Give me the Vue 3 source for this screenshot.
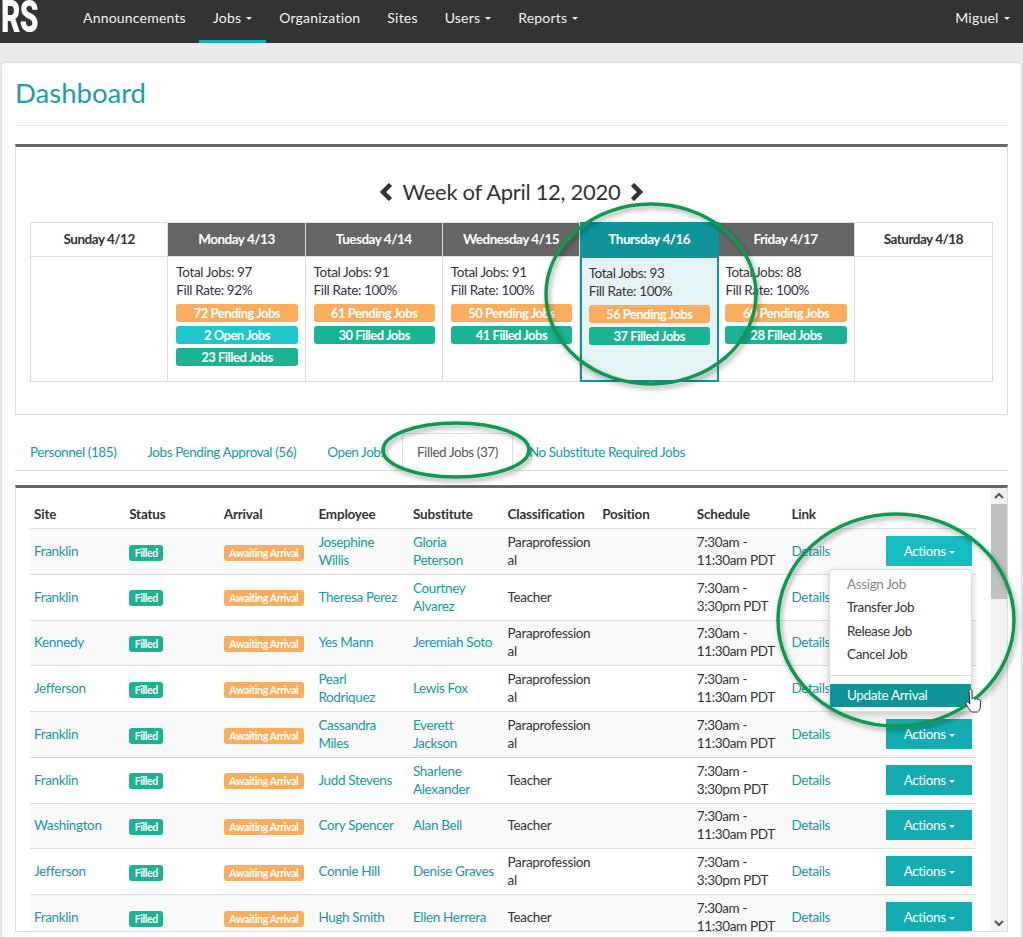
<script setup>
const navLeft = [
  { label: 'Announcements' },
  { label: 'Jobs', caret: true, active: true },
  { label: 'Organization' },
  { label: 'Sites' },
  { label: 'Users', caret: true },
  { label: 'Reports', caret: true },
]

const days = [
  { name: 'Sunday 4/12', plain: true },
  { name: 'Monday 4/13', total: 97, rate: '92%', pending: 72, open: 2, filled: 23 },
  { name: 'Tuesday 4/14', total: 91, rate: '100%', pending: 61, filled: 30 },
  { name: 'Wednesday 4/15', total: 91, rate: '100%', pending: 50, filled: 41 },
  { name: 'Thursday 4/16', total: 93, rate: '100%', pending: 56, filled: 37, today: true },
  { name: 'Friday 4/17', total: 88, rate: '100%', pending: 60, filled: 28 },
  { name: 'Saturday 4/18', plain: true },
]

const tabs = [
  { label: 'Personnel (185)' },
  { label: 'Jobs Pending Approval (56)' },
  { label: 'Open Jobs' },
  { label: 'Filled Jobs (37)', active: true },
  { label: 'No Substitute Required Jobs' },
]

const headers = ['Site', 'Status', 'Arrival', 'Employee', 'Substitute', 'Classification', 'Position', 'Schedule', 'Link', '']

const P = 'Paraprofessional'
const T = 'Teacher'
const S1 = '7:30am - 11:30am PDT'
const S2 = '7:30am - 3:30pm PDT'
const rows = [
  ['Franklin', 'Josephine Willis', 'Gloria Peterson', P, S1],
  ['Franklin', 'Theresa Perez', 'Courtney Alvarez', T, S2],
  ['Kennedy', 'Yes Mann', 'Jeremiah Soto', P, S1],
  ['Jefferson', 'Pearl Rodriquez', 'Lewis Fox', P, S1],
  ['Franklin', 'Cassandra Miles', 'Everett Jackson', P, S1],
  ['Franklin', 'Judd Stevens', 'Sharlene Alexander', T, S2],
  ['Washington', 'Cory Spencer', 'Alan Bell', T, S1],
  ['Jefferson', 'Connie Hill', 'Denise Graves', P, S2],
  ['Franklin', 'Hugh Smith', 'Ellen Herrera', T, S1],
]
</script>

<template>
  <div class="app">
    <header class="nav">
      <div class="logo"><span>RS</span></div>
      <a v-for="n in navLeft" :key="n.label" class="nav-item" :class="{ active: n.active }">
        {{ n.label }}<i v-if="n.caret" class="caret"></i>
      </a>
      <a class="nav-item user">Miguel<i class="caret"></i></a>
    </header>

    <main class="panel">
      <h1>Dashboard</h1>

      <section class="week">
        <div class="week-title">
          <svg class="chev" viewBox="0 0 16 18"><path d="M11.5 1.5 4 9l7.5 7.500" /></svg>
          <span>Week of April 12, 2020</span>
          <svg class="chev" viewBox="0 0 16 18"><path d="M4.500 1.500 12 9l-7.500 7.500" /></svg>
        </div>
        <div class="calendar">
          <div v-for="d in days" :key="d.name" class="day" :class="{ plain: d.plain, today: d.today }">
            <div class="day-head">{{ d.name }}</div>
            <div class="day-body">
              <template v-if="!d.plain">
                <div>Total Jobs: {{ d.total }}</div>
                <div>Fill Rate: {{ d.rate }}</div>
                <div class="pills">
                  <div class="pill orange">{{ d.pending }} Pending Jobs</div>
                  <div v-if="d.open" class="pill cyan">{{ d.open }} Open Jobs</div>
                  <div class="pill green">{{ d.filled }} Filled Jobs</div>
                </div>
              </template>
            </div>
          </div>
        </div>
      </section>

      <nav class="tabs">
        <a v-for="t in tabs" :key="t.label" class="tab" :class="{ active: t.active }">{{ t.label }}</a>
      </nav>

      <section class="list">
        <div class="scroll">
          <div class="row head">
            <div v-for="(h, i) in headers" :key="i" class="cell">{{ h }}</div>
          </div>
          <div v-for="(r, i) in rows" :key="i" class="row" :class="{ odd: i % 2 === 0 }">
            <div class="cell"><a>{{ r[0] }}</a></div>
            <div class="cell"><span class="tag green">Filled</span></div>
            <div class="cell"><span class="tag orange">Awaiting Arrival</span></div>
            <div class="cell"><a>{{ r[1] }}</a></div>
            <div class="cell"><a>{{ r[2] }}</a></div>
            <div class="cell cls">{{ r[3] }}</div>
            <div class="cell"></div>
            <div class="cell">{{ r[4] }}</div>
            <div class="cell"><a>Details</a></div>
            <div class="cell action">
              <button class="btn" :class="{ open: i === 0 }">Actions<i class="caret"></i></button>
              <div v-if="i === 0" class="menu">
                <div class="menu-item disabled">Assign Job</div>
                <div class="menu-item">Transfer Job</div>
                <div class="menu-item">Release Job</div>
                <div class="menu-item">Cancel Job</div>
                <div class="divider"></div>
                <div class="menu-item hover">Update Arrival</div>
              </div>
            </div>
          </div>
        </div>
        <div class="scrollbar">
          <svg viewBox="0 0 16 16"><path d="M4 10l4-4 4 4" /></svg>
          <div class="track"><div class="thumb"></div></div>
          <svg viewBox="0 0 16 16"><path d="M4 6l4 4 4-4" /></svg>
        </div>
      </section>
    </main>

    <svg class="marks" width="1023" height="937" viewBox="0 0 1023 937">
      <defs>
        <filter id="soft" x="-10%" y="-10%" width="125%" height="125%">
          <feDropShadow dx="2" dy="3" stdDeviation="2.500" flood-color="#000" flood-opacity=".35" />
        </filter>
      </defs>
      <g fill="none" stroke="#0c9a50" stroke-width="3.500" filter="url(#soft)">
        <ellipse cx="651" cy="294" rx="105" ry="90" />
        <ellipse cx="456" cy="450" rx="73" ry="27" />
        <ellipse cx="896" cy="620" rx="118" ry="106" />
      </g>
      <path class="hand" d="M969 691c0-2 3-2 3 0v8c0-1.500 3-1.500 3 .5 0-1.500 3-1 3 .5 0-1 2.500-.5 2.500 1v5c0 3-1.500 5-3 6h-6c-1.500-1.500-4-5-5.500-8-.8-1.800 1.200-2.800 2.500-1.500l1.500 1.500z" />
    </svg>
  </div>
</template>

<style>
html, body { margin: 0; background: #ebebeb; }
body { height: 937px; overflow: hidden; }
</style>

<style scoped>
.app {
  position: relative;
  width: 1023px;
  height: 937px;
  overflow: hidden;
  font: 13.500px/18px Lato, "Open Sans", sans-serif;
  letter-spacing: -.35px;
  color: #333;
  background: #ebebeb;
}
a { color: #1a979e; }

.nav {
  display: flex;
  height: 43px;
  background: #333;
  color: #fff;
  font-size: 14px;
  letter-spacing: .2px;
}
.logo {
  width: 69.500px;
  height: 43px;
}
.logo span {
  display: block;
  width: 60px;
  font: 900 44px/35px Roboto, sans-serif;
  letter-spacing: -1px;
  transform: scaleX(.68);
  transform-origin: left top;
  margin-left: 1px;
  color: #fff;
}
.nav-item {
  display: flex;
  align-items: center;
  padding: 0 13.500px 8px;
  height: 35px;
  color: #f2f2f2;
}
.nav-item.active {
  padding-bottom: 5px;
  border-bottom: 3px solid #14acb0;
}
.nav-item.user { margin-left: auto; }
.caret {
  display: inline-block;
  margin-left: 5px;
  border-top: 3.500px solid currentColor;
  border-left: 3.500px solid transparent;
  border-right: 3.500px solid transparent;
  margin-top: 2px;
}

.panel {
  box-sizing: border-box;
  margin: 19px 1px 0 1px;
  height: 900px;
  padding: 14px 13px 0;
  background: #fff;
  border: 1px solid #ddd;
  border-radius: 4px;
}
h1 {
  margin: 0 0 18px;
  padding: 0 0 17px 0;
  border-bottom: 1px solid #e6e6e6;
  font: 400 27.500px/31px Lato, sans-serif;
  letter-spacing: 0;
  color: #17a0a6;
}

.week {
  height: 271px;
  box-sizing: border-box;
  padding: 31px 14px 0;
  border: 1px solid #ddd;
  border-top: 3px solid #666;
}
.week-title {
  display: flex;
  justify-content: center;
  align-items: center;
  gap: 8px;
  height: 28px;
  margin-bottom: 16px;
  font-size: 22px;
  letter-spacing: -.3px;
  color: #333;
}
.chev { width: 16px; height: 18px; }
.chev path { fill: none; stroke: #333; stroke-width: 4.500; }

.calendar {
  display: grid;
  grid-template-columns: repeat(7, 1fr);
  height: 160px;
  box-sizing: border-box;
  border: 1px solid #ddd;
}
.day {
  display: flex;
  flex-direction: column;
  border-right: 1px solid #ddd;
  min-width: 0;
}
.day:last-child { border-right: 0; }
.day-head {
  height: 31px;
  padding-bottom: 2px;
  flex: none;
  display: flex;
  align-items: center;
  justify-content: center;
  background: #666;
  color: #fff;
  font-weight: 700;
  letter-spacing: -.5px;
  border-bottom: 1px solid #ddd;
}
.day.plain .day-head { background: #fff; color: #333; }
.day-body {
  flex: 1;
  padding: 6px 7px 0 8px;
}
.pills { margin-top: 5px; display: flex; flex-direction: column; gap: 4px; }
.pill {
  height: 18px;
  line-height: 18px;
  border-radius: 3px;
  text-align: center;
  font-weight: 700;
  font-size: 13px;
  letter-spacing: -.5px;
  color: #fff;
}
.orange { background: #faad5c; }
.green { background: #1bb394; }
.cyan { background: #1fc6cc; }
.day.today {
  position: relative;
  z-index: 1;
  margin: -1px -1.500px -1px -.5px;
  border: 2px solid #11939a;
  background: #e6f3f4;
}
.day.today .day-head { background: #11939a; border-bottom: 0; height: 30px; padding-bottom: 4px; }
.day.today .day-body { padding-left: 7px; }

.tabs {
  display: flex;
  height: 38px;
  box-sizing: border-box;
  margin-top: 18px;
  border-bottom: 1px solid #ddd;
  letter-spacing: -.43px;
}
.tab {
  box-sizing: border-box;
  height: 38px;
  padding: 9px 14px;
  margin-right: 1px;
  border: 1px solid transparent;
  border-bottom: 0;
}
.tab.active {
  color: #555;
  background: #fff;
  border-color: #ddd;
  border-bottom: 1px solid #fff;
}

.list {
  display: flex;
  height: 447px;
  box-sizing: border-box;
  margin-top: 14px;
  border: 1px solid #ddd;
  border-top: 3px solid #666;
}
.scroll {
  flex: 1;
  min-width: 0;
  overflow: hidden;
  padding: 9px 15px 0 14px;
}
.row {
  display: grid;
  grid-template-columns: repeat(10, 1fr);
  align-items: center;
  height: 45.750px;
  box-sizing: border-box;
  padding-bottom: 1px;
  border-top: 1px solid #ddd;
}
.row.odd { background: #f9f9f9; }
.row.head {
  height: 31px;
  border-top: 0;
  font-weight: 700;
  letter-spacing: -.2px;
  align-items: start;
  padding: 8px 0 0;
}
.cell {
  box-sizing: border-box;
  padding: 0 4px 0 4.600px;
  min-width: 0;
}
.cell:first-child { padding-left: 4px; }
.cls { word-break: break-all; }
.tag {
  display: inline-block;
  height: 16px;
  line-height: 16px;
  padding: 0 5.500px;
  border-radius: 3px;
  color: #fff;
  font-size: 10.500px;
  font-weight: 700;
  vertical-align: middle;
  margin-top: 2px;
}
.action {
  position: relative;
  padding: 0 4px 0 5px;
}
.btn {
  display: block;
  width: 100%;
  height: 30px;
  border: 0;
  padding: 0;
  background: #14acb0;
  color: #fff;
  font: inherit;
  letter-spacing: inherit;
}
.btn.open { background: #17bcc2; }
.btn .caret { margin-left: 3px; vertical-align: middle; margin-top: 0; }
.menu {
  position: absolute;
  z-index: 3;
  top: 33px;
  right: 4px;
  width: 143px;
  height: 143px;
  box-sizing: border-box;
  padding: 3px 0 0;
  background: #fff;
  border: 1px solid #ddd;
  border-radius: 4px;
  box-shadow: 0 3px 8px rgba(0, 0, 0, .2);
}
.menu-item {
  height: 23.500px;
  line-height: 23.500px;
  padding-left: 17px;
  color: #333;
}
.menu-item.disabled { color: #888; }
.menu-item.hover { background: #11939a; color: #fff; }
.divider { height: 1px; margin: 8px 0 8px; background: #ddd; }

.scrollbar {
  flex: none;
  width: 16px;
  display: flex;
  flex-direction: column;
  background: #f1f1f1;
}
.scrollbar svg { flex: none; width: 16px; height: 16px; }
.scrollbar path { fill: none; stroke: #555; stroke-width: 2; }
.track { flex: 1; }
.thumb { height: 95px; background: #c1c1c1; }

.marks {
  position: absolute;
  left: 0;
  top: 0;
  pointer-events: none;
  z-index: 5;
}
.hand { fill: #fff; stroke: #333; stroke-width: 1; }
</style>
